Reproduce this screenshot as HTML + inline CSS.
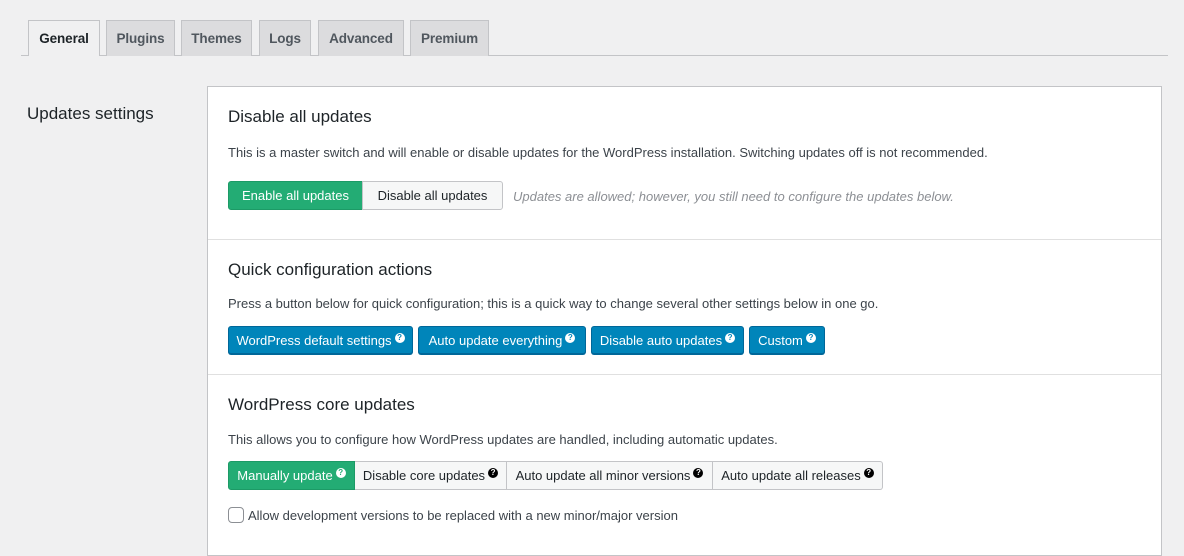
<!DOCTYPE html>
<html><head><meta charset="utf-8"><style>
*{box-sizing:border-box;margin:0;padding:0}
body{width:1184px;height:549px;background:#f0f0f1;font-family:"Liberation Sans",sans-serif;color:#1d2327;position:relative;overflow:hidden;font-size:13px}
.a{position:absolute;white-space:nowrap}
.tab{position:absolute;top:20px;height:36px;border:1px solid #c3c4c7;border-bottom:none;background:#dcdcde;color:#50575e;font-weight:bold;font-size:13.5px;text-align:center;line-height:35px;letter-spacing:-0.1px}
.tab.on{background:#f0f0f1;color:#1d2327;height:36px}
.line{position:absolute;left:21px;top:55px;width:1147px;height:1px;background:#c3c4c7}
.panel{position:absolute;left:207px;top:86px;width:955px;height:470px;background:#fff;border:1px solid #c3c4c7}
.sep{position:absolute;left:208px;width:953px;height:1px;background:#e0e0e0}
h2{position:absolute;font-size:17px;font-weight:normal;color:#1d2327;white-space:nowrap}
.p{position:absolute;font-size:13px;color:#3c434a;white-space:nowrap}
.b{position:absolute;height:29px;line-height:28px;font-size:13px;text-align:center;white-space:nowrap}
.g{background:#23ac74;color:#fff;border:1px solid #1c9a66;border-radius:3px 0 0 3px}
.w{background:#f6f7f7;color:#1d2327;border:1px solid #c3c4c7}
.bl{background:#0085ba;color:#fff;border:1px solid #006799;border-radius:3px;box-shadow:0 1px 0 #006799;height:28px;line-height:27px}
.q{display:inline-block;width:10px;height:10px;border-radius:50%;font-size:8px;line-height:10px;font-weight:bold;vertical-align:5px;margin-left:3px;text-align:center}
.qw{background:#fff;color:#0085ba}
.qg{background:#fff;color:#23ac74}
.qk{background:#000;color:#fff}
</style></head><body>
<div class="line"></div>
<div class="tab on" style="left:28px;width:72px">General</div>
<div class="tab" style="left:106px;width:69px">Plugins</div>
<div class="tab" style="left:181px;width:71px">Themes</div>
<div class="tab" style="left:259px;width:52px">Logs</div>
<div class="tab" style="left:318px;width:86px">Advanced</div>
<div class="tab" style="left:410px;width:79px">Premium</div>

<div class="a" style="left:27px;top:104px;font-size:17px">Updates settings</div>
<div class="panel"></div>
<div class="sep" style="top:239px"></div>
<div class="sep" style="top:374px"></div>

<h2 style="left:228px;top:107px">Disable all updates</h2>
<div class="p" style="left:228px;top:145px">This is a master switch and will enable or disable updates for the WordPress installation. Switching updates off is not recommended.</div>
<div class="b g" style="left:228px;top:181px;width:135px">Enable all updates</div>
<div class="b w" style="left:362px;top:181px;width:141px;border-radius:0 3px 3px 0">Disable all updates</div>
<div class="p" style="left:513px;top:189px;font-style:italic;color:#8c8f94">Updates are allowed; however, you still need to configure the updates below.</div>

<h2 style="left:228px;top:260px">Quick configuration actions</h2>
<div class="p" style="left:228px;top:296px">Press a button below for quick configuration; this is a quick way to change several other settings below in one go.</div>
<div class="b bl" style="left:228px;top:326px;width:185px">WordPress default settings<span class="q qw">?</span></div>
<div class="b bl" style="left:418px;top:326px;width:168px">Auto update everything<span class="q qw">?</span></div>
<div class="b bl" style="left:591px;top:326px;width:153px">Disable auto updates<span class="q qw">?</span></div>
<div class="b bl" style="left:749px;top:326px;width:76px">Custom<span class="q qw">?</span></div>

<h2 style="left:228px;top:395px">WordPress core updates</h2>
<div class="p" style="left:228px;top:432px">This allows you to configure how WordPress updates are handled, including automatic updates.</div>
<div class="b g" style="left:228px;top:461px;width:127px">Manually update<span class="q qg">?</span></div>
<div class="b w" style="left:355px;top:461px;width:152px;border-left:none">Disable core updates<span class="q qk">?</span></div>
<div class="b w" style="left:507px;top:461px;width:206px;border-left:none">Auto update all minor versions<span class="q qk">?</span></div>
<div class="b w" style="left:713px;top:461px;width:170px;border-left:none;border-radius:0 3px 3px 0">Auto update all releases<span class="q qk">?</span></div>
<div class="a" style="left:228px;top:507px;width:16px;height:16px;border:1px solid #8c8f94;border-radius:4px;background:#fff"></div>
<div class="p" style="left:248px;top:508px">Allow development versions to be replaced with a new minor/major version</div>
</body></html>
